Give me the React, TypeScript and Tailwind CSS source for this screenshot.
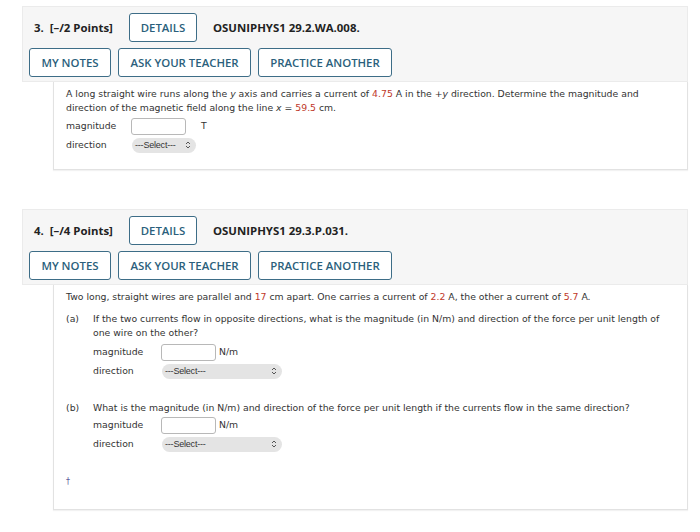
import React from "react";

const btn =
  "h-[29px] border-[1.5px] border-[#3d6d87] rounded-[3px] text-[#2b5f7c] text-[11.4px] font-semibold flex items-center justify-center bg-white";

function Header({ num, pts, code }: { num: string; pts: string; code: string }) {
  return (
    <div className="bg-[#f6f6f6] border border-[#ebebeb] h-[76px] pl-[6px] pt-[6px] flex flex-col gap-[6px]" style={{ fontFamily: '"Open Sans", sans-serif' }}>
      <div className="flex items-center h-[29px]">
        <span className="ml-[5px] w-[95px] text-[11.4px] font-bold text-[#222]">{num}&nbsp; [–/{pts} Points]</span>
        <span className={`${btn} w-[68px]`}>DETAILS</span>
        <span className="ml-[16px] text-[11.4px] font-bold text-[#222]">{code}</span>
      </div>
      <div className="flex items-center gap-[7px]">
        <span className={`${btn} w-[82px]`}>MY NOTES</span>
        <span className={`${btn} w-[133px]`}>ASK YOUR TEACHER</span>
        <span className={`${btn} w-[134px]`}>PRACTICE ANOTHER</span>
      </div>
    </div>
  );
}

const R = ({ children }: { children: React.ReactNode }) => <span className="text-[#c0392b]">{children}</span>;

function Input() {
  return <span className="inline-block w-[55px] h-[17px] border border-[#b8b8b8] rounded-[3px] bg-white"></span>;
}

function Select({ wide }: { wide?: boolean }) {
  return (
    <span
      className={`inline-flex items-center justify-between h-[15px] rounded-full bg-[#e4e4e4] pl-[3px] pr-[5px] text-[9px] text-[#333] ${wide ? "w-[120px]" : "w-[64px]"}`}
      style={{ fontFamily: '"Liberation Sans", Arial, sans-serif' }}
    >
      <span className="tracking-[-0.2px]">---Select---</span>
      <svg width="6" height="8" viewBox="0 0 6 8" className="ml-[2px]">
        <path d="M1 3 L3 1 L5 3 M1 5 L3 7 L5 5" fill="none" stroke="#555" strokeWidth="1" />
      </svg>
    </span>
  );
}

export default function App() {
  const body = { fontFamily: '"DejaVu Sans", Verdana, sans-serif' };
  return (
    <div className="w-[700px] h-[532px] bg-white pt-[6px] pl-[22px]">
      <div className="w-[666px]">
        <Header num="3." pts="2" code="OSUNIPHYS1 29.2.WA.008." />
        <div className="ml-[31px] h-[88px] border-l border-r border-b border-[#e2e2e2] shadow-[0_1px_1px_rgba(0,0,0,0.05)] pl-[12px] pt-[5px] text-[9.3px] text-[#333] leading-[14px]" style={body}>
          <p>
            A long straight wire runs along the <i>y</i> axis and carries a current of <R>4.75</R> A in the +<i>y</i> direction. Determine the magnitude and
          </p>
          <p>
            direction of the magnetic field along the line <i>x</i> = <R>59.5</R> cm.
          </p>
          <div className="flex items-center mt-[2px] h-[18px]">
            <span className="w-[65px]">magnitude</span>
            <Input />
            <span className="ml-[15px]">T</span>
          </div>
          <div className="flex items-center mt-[2px] h-[16px]">
            <span className="w-[66px]">direction</span>
            <Select />
          </div>
        </div>

        <div className="h-[39px]"></div>

        <Header num="4." pts="4" code="OSUNIPHYS1 29.3.P.031." />
        <div className="ml-[31px] h-[225px] border-l border-r border-b border-[#e2e2e2] shadow-[0_1px_1px_rgba(0,0,0,0.05)] pl-[12px] pt-[5px] text-[9.3px] text-[#333] leading-[14px]" style={body}>
          <p>
            Two long, straight wires are parallel and <R>17</R> cm apart. One carries a current of <R>2.2</R> A, the other a current of <R>5.7</R> A.
          </p>
          <div className="flex mt-[8px]">
            <span className="w-[27px]">(a)</span>
            <div>
              <p>If the two currents flow in opposite directions, what is the magnitude (in N/m) and direction of the force per unit length of</p>
              <p>one wire on the other?</p>
              <div className="flex items-center mt-[2px] h-[20px]">
                <span className="w-[68px]">magnitude</span>
                <Input />
                <span className="ml-[3px]">N/m</span>
              </div>
              <div className="flex items-center mt-[0px] h-[18px]">
                <span className="w-[69px]">direction</span>
                <Select wide />
              </div>
            </div>
          </div>
          <div className="flex mt-[21px]">
            <span className="w-[27px]">(b)</span>
            <div>
              <p>What is the magnitude (in N/m) and direction of the force per unit length if the currents flow in the same direction?</p>
              <div className="flex items-center mt-[0px] h-[20px]">
                <span className="w-[68px]">magnitude</span>
                <Input />
                <span className="ml-[3px]">N/m</span>
              </div>
              <div className="flex items-center mt-[0px] h-[18px]">
                <span className="w-[69px]">direction</span>
                <Select wide />
              </div>
            </div>
          </div>
          <div className="mt-[22px] text-[#5a5a9a] text-[8px]">†</div>
        </div>
      </div>
    </div>
  );
}
